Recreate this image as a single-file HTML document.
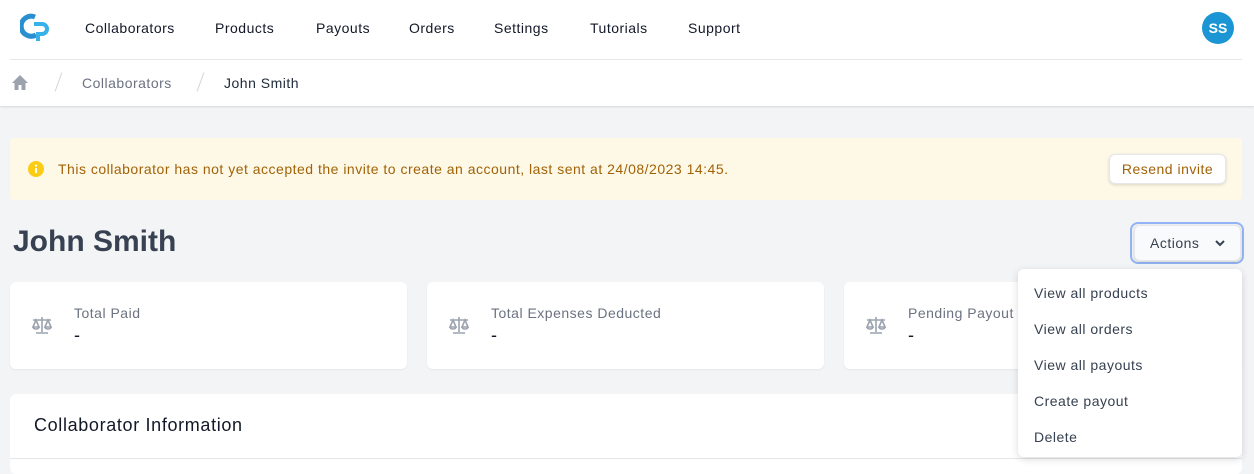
<!DOCTYPE html>
<html><head><style>
*{box-sizing:border-box;margin:0;padding:0}
body{width:1254px;height:467px;overflow:hidden;background:#f3f4f6;font-family:"Liberation Sans",sans-serif;font-size:14px;color:#111827;position:relative;letter-spacing:0.5px}
.hdr{position:absolute;left:0;top:0;width:1254px;height:106px;background:#fff;box-shadow:0 1px 2px rgba(0,0,0,.12)}
.line{position:absolute;left:10px;top:59px;width:1232px;height:1px;background:#e5e7eb}
.nav{position:absolute;top:20px;font-size:14px;color:#111827}
.av{position:absolute;left:1202px;top:12px;width:32px;height:32px;border-radius:50%;background:#1b95d3;color:#fff;font-weight:bold;font-size:14px;text-align:center;line-height:32px;letter-spacing:0}
.bc{position:absolute;top:75px;font-size:14px}
.sl{position:absolute;top:72px;width:1px;height:20px;background:#d1d5db;transform:rotate(20deg)}
.alert{position:absolute;left:10px;top:138px;width:1232px;height:62px;background:#fef9e7;border-radius:4px}
.btn{position:absolute;background:#fff;border-radius:6px;box-shadow:0 1px 3px rgba(0,0,0,.15);border:1px solid #e5e7eb}
.card{position:absolute;top:282px;width:397px;height:87px;background:#fff;border-radius:6px;box-shadow:0 1px 2px rgba(0,0,0,.06)}
.card .t{position:absolute;left:64px;top:23px;color:#6b7280;font-size:14px}
.card .v{position:absolute;left:64px;top:43px;font-size:18px;color:#111827}
.card svg{position:absolute;left:21px;top:34px}
.menu{position:absolute;left:1018px;top:269px;width:224px;height:188px;background:#fff;border-radius:6px;box-shadow:0 2px 8px rgba(0,0,0,.15)}
.menu div{position:absolute;left:16px;font-size:14px;color:#374151}
</style></head><body>
<div class="hdr">
<svg style="position:absolute;left:20px;top:13px" width="34" height="30" viewBox="0 0 34 30"><path d="M15 4 A10 10 0 1 0 16 22" fill="none" stroke="#2a8fd0" stroke-width="5"/><path d="M14 11 h8 a5 5 0 0 1 0 10 h-4 v7" fill="none" stroke="#38b2e8" stroke-width="4"/></svg>
<div class="nav" style="left:85px">Collaborators</div>
<div class="nav" style="left:215px">Products</div>
<div class="nav" style="left:316px">Payouts</div>
<div class="nav" style="left:409px">Orders</div>
<div class="nav" style="left:494px">Settings</div>
<div class="nav" style="left:590px">Tutorials</div>
<div class="nav" style="left:688px">Support</div>
<div class="av">SS</div>
<div class="line"></div>
<svg style="position:absolute;left:11px;top:74px" width="18" height="17" viewBox="0 0 18 17"><path d="M9 1 L1 9 h2.5 v7 h4 v-5 h3 v5 h4 v-7 H17 Z" fill="#9ca3af"/></svg>
<div class="sl" style="left:58px"></div>
<div class="bc" style="left:82px;color:#6b7280">Collaborators</div>
<div class="sl" style="left:200px"></div>
<div class="bc" style="left:224px;color:#1f2937">John Smith</div>
</div>
<div class="alert">
<svg style="position:absolute;left:18px;top:23px" width="16" height="16" viewBox="0 0 16 16"><circle cx="8" cy="8" r="8" fill="#facc15"/><rect x="7" y="7" width="2" height="5" fill="#fff"/><circle cx="8" cy="4.6" r="1.1" fill="#fff"/></svg>
<div style="position:absolute;left:48px;top:23px;color:#a16207">This collaborator has not yet accepted the invite to create an account, last sent at 24/08/2023 14:45.</div>
<div class="btn" style="left:1099px;top:16px;width:117px;height:30px;color:#a16207;text-align:center;line-height:28px">Resend invite</div>
</div>
<div style="position:absolute;left:13px;top:225px;font-size:30px;font-weight:bold;color:#374151;letter-spacing:0">John Smith</div>
<div style="position:absolute;left:1130px;top:222px;width:114px;height:42px;border:2px solid #93b4f5;border-radius:8px"></div>
<div class="btn" style="left:1134px;top:225px;width:107px;height:36px;background:#f9fafb;color:#374151;line-height:34px;padding-left:15px">Actions<svg style="position:absolute;left:80px;top:13px" width="10" height="8" viewBox="0 0 10 8"><path d="M1 2 L5 6 L9 2" fill="none" stroke="#374151" stroke-width="2"/></svg></div>
<div class="card" style="left:10px"><svg width="22" height="18" viewBox="0 0 22 18" fill="none" stroke="#9ca3af" stroke-width="1.6"><path d="M11 1v15M5 17h12M2 4h18M5 4l-3 7h6zM17 4l-3 7h6z"/><path d="M2 11a3 2 0 0 0 6 0M14 11a3 2 0 0 0 6 0"/></svg><div class="t">Total Paid</div><div class="v">-</div></div>
<div class="card" style="left:427px"><svg width="22" height="18" viewBox="0 0 22 18" fill="none" stroke="#9ca3af" stroke-width="1.6"><path d="M11 1v15M5 17h12M2 4h18M5 4l-3 7h6zM17 4l-3 7h6z"/><path d="M2 11a3 2 0 0 0 6 0M14 11a3 2 0 0 0 6 0"/></svg><div class="t">Total Expenses Deducted</div><div class="v">-</div></div>
<div class="card" style="left:844px"><svg width="22" height="18" viewBox="0 0 22 18" fill="none" stroke="#9ca3af" stroke-width="1.6"><path d="M11 1v15M5 17h12M2 4h18M5 4l-3 7h6zM17 4l-3 7h6z"/><path d="M2 11a3 2 0 0 0 6 0M14 11a3 2 0 0 0 6 0"/></svg><div class="t">Pending Payout Total</div><div class="v">-</div></div>
<div style="position:absolute;left:10px;top:394px;width:1232px;height:80px;background:#fff;border-radius:6px">
<div style="position:absolute;left:24px;top:21px;font-size:18px;color:#111827;letter-spacing:0.65px">Collaborator Information</div>
<div style="position:absolute;left:0;top:64px;width:100%;height:1px;background:#e5e7eb"></div>
</div>
<div class="menu">
<div style="top:16px">View all products</div>
<div style="top:52px">View all orders</div>
<div style="top:88px">View all payouts</div>
<div style="top:124px">Create payout</div>
<div style="top:160px">Delete</div>
</div>
</body></html>
